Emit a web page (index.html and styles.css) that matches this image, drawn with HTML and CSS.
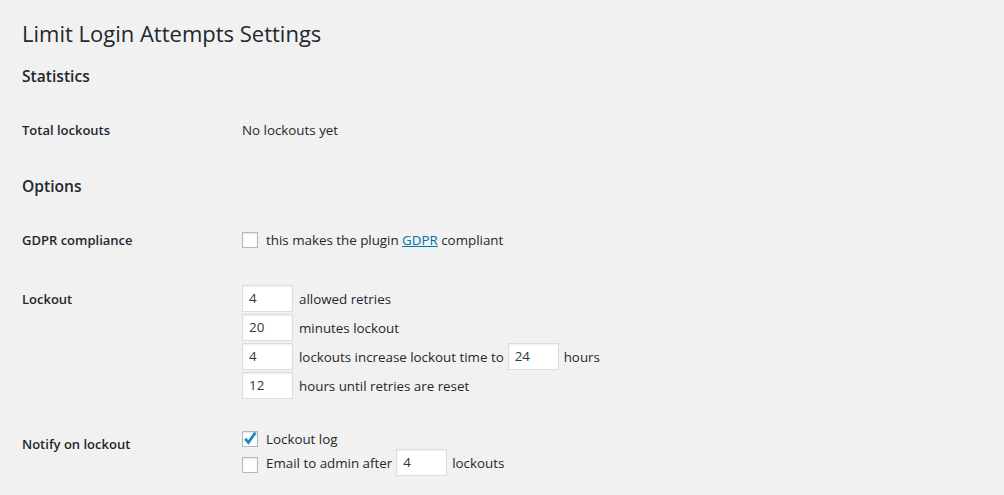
FILE: index.html
```html
<!DOCTYPE html>
<html lang="en">
<head>
<meta charset="utf-8">
<title>Limit Login Attempts Settings</title>
<link rel="stylesheet" href="styles.css">
</head>
<body>
<div class="wrap">
  <h1 class="page-title">Limit Login Attempts Settings</h1>

  <h2 class="section-title">Statistics</h2>
  <div class="form-table">
    <div class="row">
      <div class="th">Total lockouts</div>
      <div class="td td-text">No lockouts yet</div>
    </div>
  </div>

  <h2 class="section-title section-options">Options</h2>
  <div class="form-table">
    <div class="row row-gdpr">
      <div class="th">GDPR compliance</div>
      <div class="td td-check">
        <label class="line">
          <span class="checkbox"></span>
          <span>this makes the plugin <a href="#" class="link">GDPR</a> compliant</span>
        </label>
      </div>
    </div>

    <div class="row">
      <div class="th">Lockout</div>
      <div class="td td-inputs">
        <div class="input-line"><span class="input">4</span><span>allowed retries</span></div>
        <div class="input-line"><span class="input">20</span><span>minutes lockout</span></div>
        <div class="input-line"><span class="input">4</span><span>lockouts increase lockout time to</span><span class="input input-mid">24</span><span>hours</span></div>
        <div class="input-line"><span class="input">12</span><span>hours until retries are reset</span></div>
      </div>
    </div>

    <div class="row">
      <div class="th">Notify on lockout</div>
      <div class="td td-notify">
        <label class="line line-short">
          <span class="checkbox checked">
            <svg viewBox="0 0 16 16" width="16" height="16"><path d="M3.2 7.8 L6.4 11.4 L13.4 1.6" fill="none" stroke="#1e8cbe" stroke-width="2.8" stroke-linecap="butt" stroke-linejoin="miter"/></svg>
          </span>
          <span>Lockout log</span>
        </label>
        <label class="line line-input">
          <span class="checkbox low"></span>
          <span>Email to admin after</span>
          <span class="input">4</span>
          <span>lockouts</span>
        </label>
      </div>
    </div>
  </div>
</div>
</body>
</html>
```

FILE: styles.css
```css
html, body {
  margin: 0;
  padding: 0;
  background: #f1f1f1;
}

body {
  font-family: "Open Sans", "Noto Sans", "Liberation Sans", sans-serif;
  color: #23282d;
  font-size: 13.35px;
}

.wrap {
  padding: 0 0 0 22px;
}

.page-title {
  margin: 0;
  padding-top: 18px;
  font-size: 22px;
  font-weight: 400;
  line-height: 30px;
  height: 30px;
}

.section-title {
  margin: 17px 0 14px;
  font-size: 15.6px;
  font-weight: 600;
  line-height: 22px;
  height: 22px;
}

.section-options {
  margin-top: 16px;
}

.row {
  display: flex;
}

.th {
  width: 220px;
  flex: none;
  box-sizing: border-box;
  padding: 20px 10px 20px 0;
  line-height: 18px;
  font-weight: 600;
  font-size: 13px;
}

.row-gdpr .th {
  padding-bottom: 21px;
}

.td {
  padding: 15px 10px 15px 0;
}

.td-text {
  padding: 20px 10px 20px 0;
  line-height: 18px;
}

.td-check {
  height: 28px;
}

.line {
  display: flex;
  align-items: center;
  height: 28px;
}

.checkbox {
  display: inline-block;
  box-sizing: border-box;
  width: 16px;
  height: 16px;
  border: 1px solid #b4b9be;
  background: #fff;
  box-shadow: inset 0 1px 2px rgba(0, 0, 0, 0.1);
  margin-right: 8px;
  position: relative;
  flex: none;
}

.checkbox svg {
  position: absolute;
  left: -1px;
  top: -1px;
}

.link {
  color: #0073aa;
  text-decoration: underline;
}

.td-inputs {
  padding-top: 15px;
  padding-bottom: 16px;
  display: flex;
  flex-direction: column;
  gap: 2px;
}

.input-line {
  display: flex;
  align-items: center;
  height: 27px;
  gap: 5px;
}

.input {
  display: inline-block;
  box-sizing: border-box;
  width: 51px;
  height: 27px;
  line-height: 25px;
  padding: 0 6px;
  border: 1px solid #ddd;
  background: #fff;
  box-shadow: inset 0 1px 2px rgba(0, 0, 0, 0.07);
  color: #32373c;
  font-size: 13.35px;
  margin-right: 1px;
}

.input-mid {
  margin-left: -1px;
  margin-right: 0;
}

.td-notify {
  padding-top: 14px;
  display: flex;
  flex-direction: column;
}

.line-short {
  height: 20px;
}

.line-input {
  height: 27px;
  gap: 0;
}

.line-input .input {
  margin: 0 5px 0 4px;
}

.checkbox.low {
  margin-top: 5px;
}
```
